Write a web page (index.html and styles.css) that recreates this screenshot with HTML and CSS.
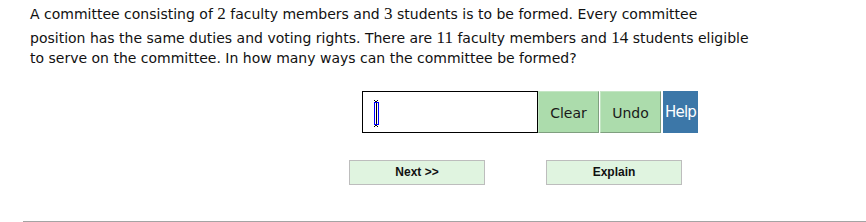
FILE: index.html
```html
<!DOCTYPE html>
<html lang="en">
<head>
  <meta charset="UTF-8" />
  <title>Committee question</title>
  <link rel="stylesheet" href="styles.css">
</head>
<body>

<div class="question">
  <p class="prompt">
    A committee consisting of <span class="num">2</span> faculty members and <span class="num">3</span> students is to be formed. Every committee<br>
    position has the same duties and voting rights. There are <span class="num">11</span> faculty members and <span class="num">14</span> students eligible<br>
    to serve on the committee. In how many ways can the committee be formed?
  </p>

  <!-- answer entry -->
  <div class="answer-row">
    <div class="answer-box">
      <svg class="caret" width="8" height="27" viewBox="0 0 8 27">
        <path d="M1 0l2 2M5 0l-2 2M1 27l2-2M5 27l-2-2" stroke="#000" stroke-width="1" fill="none"/>
        <rect x="1.5" y="2.5" width="4" height="22" stroke="#0000ff" fill="none"/>
        <line x1="3.5" y1="3" x2="3.5" y2="24" stroke="#000" stroke-width="1"/>
      </svg>
    </div>
    <button class="key">Clear</button>
    <button class="key">Undo</button>
    <button class="key help">Help</button>
  </div>

  <div class="nav-row">
    <button class="nav-btn">Next &gt;&gt;</button>
    <button class="nav-btn">Explain</button>
  </div>
</div>

<div class="divider"></div>

</body>
</html>
```

FILE: styles.css
```css
* {
  margin: 0;
  padding: 0;
  box-sizing: border-box;
}

body {
  font-family: "DejaVu Sans", Verdana, sans-serif;
  background: #fff;
  color: #111;
}

.question {
  padding: 0 0 0 30px;
}

.prompt {
  font-size: 14px;
  line-height: 20px;
  white-space: nowrap;
}

.num {
  display: inline-block;
  font-family: "Liberation Serif", "Times New Roman", serif;
  font-size: 17px;
  line-height: 16px;
  padding-top: 6px;
}

.answer-row {
  display: flex;
  margin: 23px 0 0 332px;
  height: 42px;
}

.answer-box {
  width: 176px;
  height: 42px;
  border: 1px solid #000;
  padding: 8px 0 0 10px;
}

.caret {
  display: block;
}

.key {
  font-family: "DejaVu Sans", Verdana, sans-serif;
  font-size: 14px;
  color: #1a1a1a;
  background: #acdcac;
  border: 1px solid;
  border-color: #c4e6c4 #7f9f7f #7f9f7f #c4e6c4;
  width: 61px;
  height: 42px;
  padding-top: 1px;
  cursor: pointer;
}

.key + .key {
  margin-left: 1px;
}

.help {
  width: 35px;
  margin-left: 2px !important;
  background: #3c77a8;
  border-color: #3c77a8;
  color: #fff;
  font-size: 15px;
  letter-spacing: -0.8px;
  padding: 0;
}

.nav-row {
  display: flex;
  gap: 61px;
  margin: 27px 0 0 319px;
}

.nav-btn {
  width: 136px;
  height: 25px;
  background: #e0f4e0;
  border: 1px solid #bdbdbd;
  font-family: "Liberation Sans", Arial, sans-serif;
  font-weight: bold;
  font-size: 12px;
  color: #111;
  padding-bottom: 2px;
  cursor: pointer;
}

.divider {
  margin: 36px 0 0 23px;
  height: 2px;
  background: #a4a4a4;
}
```
